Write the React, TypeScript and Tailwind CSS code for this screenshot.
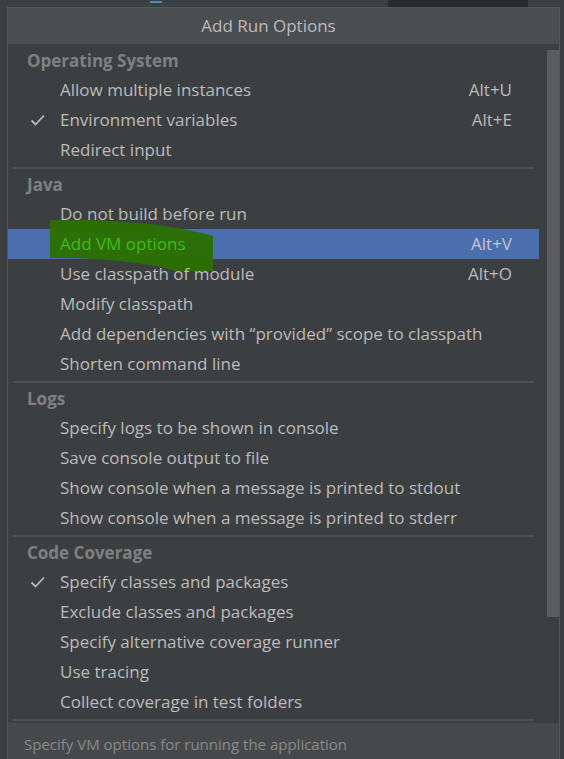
import React from "react";

type Item = { label: string; shortcut?: string; checked?: boolean; selected?: boolean };
type Section = { title: string; items: Item[] };

const sections: Section[] = [
  {
    title: "Operating System",
    items: [
      { label: "Allow multiple instances", shortcut: "Alt+U" },
      { label: "Environment variables", shortcut: "Alt+E", checked: true },
      { label: "Redirect input" },
    ],
  },
  {
    title: "Java",
    items: [
      { label: "Do not build before run" },
      { label: "Add VM options", shortcut: "Alt+V", selected: true },
      { label: "Use classpath of module", shortcut: "Alt+O" },
      { label: "Modify classpath" },
      { label: "Add dependencies with \u201Cprovided\u201D scope to classpath" },
      { label: "Shorten command line" },
    ],
  },
  {
    title: "Logs",
    items: [
      { label: "Specify logs to be shown in console" },
      { label: "Save console output to file" },
      { label: "Show console when a message is printed to stdout" },
      { label: "Show console when a message is printed to stderr" },
    ],
  },
  {
    title: "Code Coverage",
    items: [
      { label: "Specify classes and packages", checked: true },
      { label: "Exclude classes and packages" },
      { label: "Specify alternative coverage runner" },
      { label: "Use tracing" },
      { label: "Collect coverage in test folders" },
    ],
  },
];

function Check() {
  return (
    <svg width="16" height="14" viewBox="0 0 16 14" className="block">
      <path d="M1.5 7.5 L5.5 11.5 L14 2.5" fill="none" stroke="#bbbbbb" strokeWidth="1.8" />
    </svg>
  );
}

function Marker() {
  return (
    <svg className="pointer-events-none absolute left-0 top-[-10px]" width="220" height="56">
      <path
        d="M42 1 C 72 0, 102 1, 142 5 C 172 9, 192 13, 205 17 L 205 52 L 168 52 C 152 47, 112 39, 42 39 Z"
        fill="#2a6f00"
        fillOpacity="0.95"
      />
    </svg>
  );
}

function Row({ item }: { item: Item }) {
  return (
    <div
      className={`relative flex h-[30px] items-center pr-[27px] ${item.selected ? "bg-[#4b6eaf]" : ""}`}
    >
      {item.selected ? <Marker /> : null}
      <div className="flex w-[52px] shrink-0 items-center justify-end pr-[14px]">
        {item.checked ? <Check /> : null}
      </div>
      <span
        className={`relative z-[1] flex-1 whitespace-nowrap ${item.selected ? "text-[#3fba1a]" : "text-[#bbbbbb]"}`}
      >
        {item.label}
      </span>
      {item.shortcut ? (
        <span className={`relative z-[1] whitespace-nowrap ${item.selected ? "text-[#c3c8d0]" : "text-[#bbbbbb]"}`}>
          {item.shortcut}
        </span>
      ) : null}
    </div>
  );
}

function Separator() {
  return <div className="mx-[5px] mb-[1px] mt-[2px] h-[2px] bg-[#4d5052]" />;
}

export default function App() {
  return (
    <div
      className="relative h-[759px] w-[564px] overflow-hidden bg-[#3c3f41] text-[17px]"
      style={{ fontFamily: '"Open Sans", "Noto Sans", sans-serif' }}
    >
      {/* background IDE fragments */}
      <div className="flex h-[7px] w-[564px] bg-[#3c3f41]">
        <div className="ml-[150px] mt-[-2px] h-[5px] w-[12px] border-b-2 border-[#4a88c7]" />
        <div className="ml-[226px] h-[7px] w-[140px] bg-[#2b2b2b]" />
      </div>

      {/* popup */}
      <div className="absolute left-[7px] top-[7px] flex h-[758px] w-[553px] flex-col border-l border-r border-t border-[#55585a] bg-[#3c3f41]">
        <div className="flex h-[36px] shrink-0 items-center justify-center bg-[#4b4e51] pr-[30px] text-[17px] text-[#bbbbbb]">
          Add Run Options
        </div>
        <div className="flex h-[679px] shrink-0">
          <div className="w-[531px] pt-[2px]">
            {sections.map((s, i) => (
              <div key={s.title}>
                {i > 0 ? <Separator /> : null}
                <div className="flex h-[29px] items-center pl-[19px] font-bold text-[#808080]">{s.title}</div>
                {s.items.map((it) => (
                  <Row key={it.label} item={it} />
                ))}
              </div>
            ))}
            <Separator />
          </div>
          <div className="flex-1">
            <div className="ml-[8px] mt-[6px] h-[567px] w-[12px] bg-[#5a5c5e]" />
          </div>
        </div>
        <div className="flex h-[42px] shrink-0 items-center bg-[#46494b] pl-[16px] text-[15px] text-[#8a8a8a]">
          Specify VM options for running the application
        </div>
      </div>
    </div>
  );
}
